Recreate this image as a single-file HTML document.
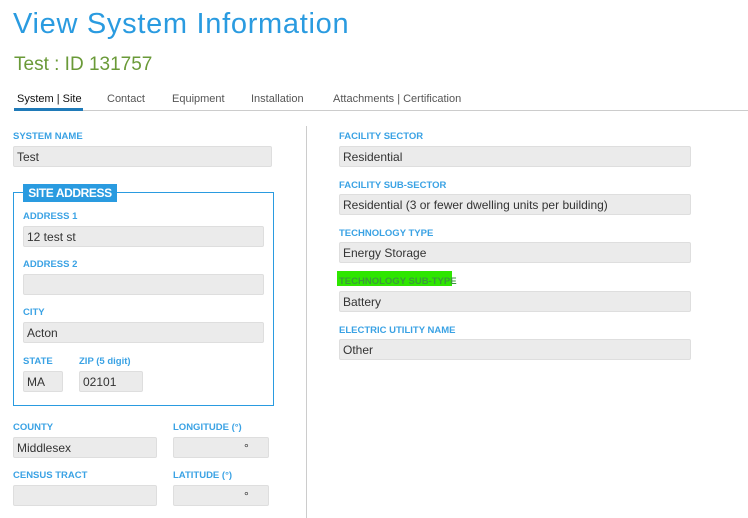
<!DOCTYPE html>
<html><head><meta charset="utf-8">
<style>
*{margin:0;padding:0;box-sizing:border-box}
body{width:748px;height:518px;background:#fff;font-family:"Liberation Sans",sans-serif;position:relative;overflow:hidden}
.a{position:absolute;white-space:nowrap}
h1{position:absolute;left:13px;top:8px;font-size:29px;font-weight:normal;color:#2a9be0;letter-spacing:0.7px}
h2{position:absolute;left:14px;top:54px;font-size:19px;font-weight:normal;color:#6a9a38}
.tab{position:absolute;top:93px;font-size:11px;color:#555}
.lbl{position:absolute;font-size:9.5px;font-weight:bold;color:#3aa2e4;white-space:nowrap}
.in{position:absolute;height:21px;background:#ebebeb;border:1px solid #dedede;border-radius:2px;font-size:12px;color:#333;padding:3px 0 0 3px;white-space:nowrap}
</style></head><body>
<h1>View System Information</h1>
<h2>Test : ID 131757</h2>
<div class="tab" style="left:17px;color:#111">System | Site</div>
<div class="tab" style="left:107px">Contact</div>
<div class="tab" style="left:172px">Equipment</div>
<div class="tab" style="left:251px">Installation</div>
<div class="tab" style="left:333px">Attachments | Certification</div>
<div class="a" style="left:14px;top:110px;width:734px;height:1px;background:#ccc"></div>
<div class="a" style="left:14px;top:108px;width:69px;height:3px;background:#1f7ab8"></div>
<div class="a" style="left:306px;top:126px;width:1px;height:392px;background:#ccc"></div>

<div class="lbl" style="left:13px;top:131px">SYSTEM NAME</div>
<div class="in" style="left:13px;top:146px;width:259px">Test</div>

<div class="a" style="left:13px;top:192px;width:261px;height:214px;border:1px solid #2a9be0"></div>
<div class="a" style="left:23px;top:184px;width:94px;height:18px;background:#2a9be0;color:#fff;font-weight:bold;font-size:12px;text-align:center;line-height:18px;letter-spacing:-0.4px">SITE ADDRESS</div>
<div class="lbl" style="left:23px;top:211px">ADDRESS 1</div>
<div class="in" style="left:23px;top:226px;width:241px">12 test st</div>
<div class="lbl" style="left:23px;top:259px">ADDRESS 2</div>
<div class="in" style="left:23px;top:274px;width:241px"></div>
<div class="lbl" style="left:23px;top:307px">CITY</div>
<div class="in" style="left:23px;top:322px;width:241px">Acton</div>
<div class="lbl" style="left:23px;top:356px">STATE</div>
<div class="lbl" style="left:79px;top:356px">ZIP (5 digit)</div>
<div class="in" style="left:23px;top:371px;width:40px">MA</div>
<div class="in" style="left:79px;top:371px;width:64px">02101</div>

<div class="lbl" style="left:13px;top:422px">COUNTY</div>
<div class="in" style="left:13px;top:437px;width:144px">Middlesex</div>
<div class="lbl" style="left:173px;top:422px">LONGITUDE (°)</div>
<div class="in" style="left:173px;top:437px;width:96px;padding-left:70px">°</div>
<div class="lbl" style="left:13px;top:470px">CENSUS TRACT</div>
<div class="in" style="left:13px;top:485px;width:144px"></div>
<div class="lbl" style="left:173px;top:470px">LATITUDE (°)</div>
<div class="in" style="left:173px;top:485px;width:96px;padding-left:70px">°</div>

<div class="lbl" style="left:339px;top:131px">FACILITY SECTOR</div>
<div class="in" style="left:339px;top:146px;width:352px">Residential</div>
<div class="lbl" style="left:339px;top:180px">FACILITY SUB-SECTOR</div>
<div class="in" style="left:339px;top:194px;width:352px">Residential (3 or fewer dwelling units per building)</div>
<div class="lbl" style="left:339px;top:228px">TECHNOLOGY TYPE</div>
<div class="in" style="left:339px;top:242px;width:352px">Energy Storage</div>
<div class="a" style="left:337px;top:271px;width:115px;height:15px;background:#2ee600"></div>
<div class="lbl" style="left:339px;top:276px;color:#3a9a3a">TECHNOLOGY SUB-TYPE</div>
<div class="in" style="left:339px;top:291px;width:352px">Battery</div>
<div class="lbl" style="left:339px;top:325px">ELECTRIC UTILITY NAME</div>
<div class="in" style="left:339px;top:339px;width:352px">Other</div>
</body></html>
